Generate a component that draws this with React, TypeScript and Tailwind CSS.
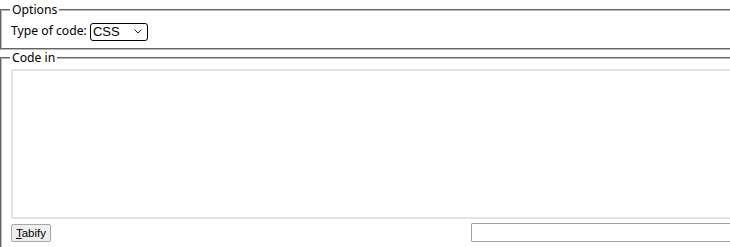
export default function App() {
  return (
    <div className="w-[730px] h-[247px] overflow-hidden bg-white text-black text-[12.2px] font-['Noto_Sans','Open_Sans',sans-serif]">
      <div className="w-[780px]">
        <fieldset className="border-2 [border-style:groove] border-[#b8b8b8] px-[9px] pt-[1px] pb-[6px]">
          <legend className="px-[2px] -ml-[1px] leading-[20px]">Options</legend>
          <div className="flex items-center gap-[3px] h-[21px]">
            <label htmlFor="lang">Type of code:</label>
            <div className="relative">
              <select
                id="lang"
                defaultValue="css"
                className="block h-[18px] w-[58px] border-[1.5px] border-black rounded-[3px] bg-white text-[13px] leading-[14px] pl-[2px] font-['Liberation_Sans',Arial,sans-serif] appearance-none outline-none"
              >
                <option value="css">CSS</option>
                <option value="js">JavaScript</option>
                <option value="html">HTML</option>
              </select>
              <svg
                className="pointer-events-none absolute right-[6px] top-[6px]"
                width="8"
                height="5"
                viewBox="0 0 8 5"
                fill="none"
              >
                <path d="M0.5 0.5 L4 4 L7.5 0.5" stroke="#222" strokeWidth="1" />
              </svg>
            </div>
          </div>
        </fieldset>
        <fieldset className="border-2 [border-style:groove] border-[#b8b8b8] px-[9px] pt-[4px] pb-[6px]">
          <legend className="px-[2px] -ml-[1px] leading-[15px]">Code in</legend>
          <textarea className="block w-full h-[150px] border-2 border-[#e3e3e3] rounded-[2px] resize-none outline-none" />
          <div className="flex items-center justify-between mt-[4px]">
            <button
              type="button"
              accessKey="t"
              className="h-[18px] w-[40px] border border-[#a8a8a8] rounded-[2px] bg-[#efefef] text-[11.5px] leading-[16px] font-['Liberation_Sans',Arial,sans-serif]"
            >
              <span className="underline">T</span>abify
            </button>
            <input type="text" className="h-[19px] w-[298px] border border-[#a0a0a0] rounded-[1px] outline-none" />
          </div>
        </fieldset>
      </div>
    </div>
  );
}
